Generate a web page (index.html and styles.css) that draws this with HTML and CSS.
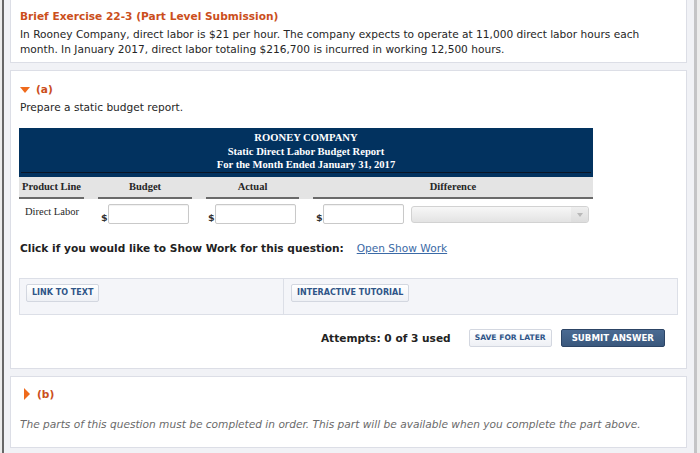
FILE: index.html
```html
<!DOCTYPE html>
<html>
<head>
<meta charset="utf-8">
<link rel="stylesheet" href="styles.css">
</head>
<body>
<div class="frame">
  <section class="card intro">
    <h1 class="title">Brief Exercise 22-3 (Part Level Submission)</h1>
    <p class="para">In Rooney Company, direct labor is $21 per hour. The company expects to operate at 11,000 direct labor hours each<br>month. In January 2017, direct labor totaling $216,700 is incurred in working 12,500 hours.</p>
  </section>

  <section class="card part-a">
    <div class="part-head"><span class="tri-down"></span><span class="part-label">(a)</span></div>
    <p class="prompt">Prepare a static budget report.</p>

    <div class="report">
      <div class="report-head">
        <div class="report-title">ROONEY COMPANY<br>Static Direct Labor Budget Report<br>For the Month Ended January 31, 2017</div>
      </div>
      <div class="grid cols">
        <div class="colh left">Product Line</div>
        <div class="colh">Budget</div>
        <div class="colh">Actual</div>
        <div class="colh">Difference</div>
      </div>
      <div class="grid row">
        <div class="cell label">Direct Labor</div>
        <div class="cell amt b"><span class="cur">$</span><span class="input"></span></div>
        <div class="cell amt a"><span class="cur">$</span><span class="input"></span></div>
        <div class="cell amt d"><span class="cur">$</span><span class="input"></span><span class="select"><span class="arrow"></span></span></div>
      </div>
    </div>

    <p class="showwork"><span class="sw-q">Click if you would like to Show Work for this question:</span><a class="sw-link">Open Show Work</a></p>

    <div class="toolbar">
      <div class="tool-cell"><span class="btn">LINK TO TEXT</span></div>
      <div class="tool-cell divider"><span class="btn">INTERACTIVE TUTORIAL</span></div>
    </div>

    <div class="actions">
      <span class="attempts">Attempts: 0 of 3 used</span>
      <span class="btn save">SAVE FOR LATER</span>
      <span class="btn submit">SUBMIT ANSWER</span>
    </div>
  </section>

  <section class="card part-b">
    <div class="part-head"><span class="tri-right"></span><span class="part-label">(b)</span></div>
    <p class="notice">The parts of this question must be completed in order. This part will be available when you complete the part above.</p>
  </section>
</div>
</body>
</html>
```

FILE: styles.css
```css
html, body {
  margin: 0;
  padding: 0;
  background: #ececec;
}
body {
  font-family: "DejaVu Sans", Verdana, sans-serif;
  font-size: 10.6px;
  color: #262626;
}
.frame {
  margin: 0 3px 0 2px;
  border-left: 2px solid #676767;
  border-right: 3px solid #c4c4c6;
  padding: 0 7px 4px 6px;
  background: #f1f2f6;
  min-height: 449px;
}
.card {
  background: #fff;
  border: 1px solid #dcdee6;
  padding: 0 8px 0 9px;
}
.intro {
  border-top: none;
  padding-top: 9px;
  padding-bottom: 6px;
}
.title {
  margin: 0;
  font-size: 10.6px;
  line-height: 15px;
  font-weight: bold;
  color: #cb4f1c;
}
.para {
  margin: 3px 0 0;
  line-height: 14.5px;
  white-space: nowrap;
}
.part-a {
  margin-top: 7px;
  padding-top: 11px;
  padding-bottom: 21px;
}
.part-head {
  display: flex;
  align-items: center;
  height: 15px;
}
.part-label {
  font-weight: bold;
  color: #cb4f1c;
  line-height: 15px;
}
.tri-down {
  width: 0;
  height: 0;
  border-left: 5.5px solid transparent;
  border-right: 5.5px solid transparent;
  border-top: 6px solid #ef6a1c;
  margin: 0 6px 0 0;
}
.tri-right {
  width: 0;
  height: 0;
  border-top: 6.5px solid transparent;
  border-bottom: 6.5px solid transparent;
  border-left: 6px solid #ef6a1c;
  margin: 0 7px 0 4px;
}
.prompt {
  margin: 3px 0 0;
  line-height: 15px;
}
.report {
  margin: 13px 0 0 -1px;
  width: 574px;
  font-family: "Liberation Serif", "Times New Roman", serif;
}
.report-head {
  background: #02325f;
  padding: 3px 2px 4px;
}
.report-title {
  color: #fff;
  font-weight: bold;
  font-size: 10.6px;
  line-height: 13.5px;
  text-align: center;
  border-bottom: 1px solid #0b1526;
}
.grid {
  display: grid;
  grid-template-columns: 65px 94px 93px 1fr;
  column-gap: 14px;
}
.cols {
  background: #e4e4e4;
}
.colh {
  height: 20px;
  line-height: 19px;
  font-weight: bold;
  font-size: 10.5px;
  text-align: center;
  border-bottom: 2px solid #6a6a6a;
}
.colh.left {
  text-align: left;
  padding-left: 3px;
}
.row {
  height: 29px;
}
.cell.label {
  padding: 6px 0 0 6px;
  font-size: 10.5px;
  line-height: 14px;
}
.amt {
  display: flex;
  align-items: flex-end;
  height: 25px;
}
.amt.b { padding-left: 3px; }
.amt.a { padding-left: 2px; }
.amt.d { padding-left: 3px; }
.cur {
  font-family: "DejaVu Sans", Verdana, sans-serif;
  font-size: 9.5px;
  font-weight: bold;
  color: #333;
  width: 7px;
  line-height: 11px;
  margin-bottom: 1px;
}
.input {
  display: block;
  width: 79px;
  height: 18px;
  border: 1px solid #c9c9c9;
  border-radius: 2px;
  background: #fff;
  box-shadow: inset 0 1px 1px rgba(0,0,0,0.06);
}
.select {
  position: relative;
  display: block;
  width: 176px;
  height: 15px;
  margin: 0 0 1px 7px;
  border: 1px solid #d2d2d2;
  border-radius: 3px;
  background: linear-gradient(#f7f7f7, #e3e3e3);
}
.arrow {
  position: absolute;
  right: 0;
  top: 0;
  width: 17px;
  height: 15px;
  background: linear-gradient(#eeeeee, #dddddd);
  border-radius: 0 3px 3px 0;
}
.arrow::after {
  content: "";
  position: absolute;
  left: 6px;
  top: 6px;
  border-left: 3.5px solid transparent;
  border-right: 3.5px solid transparent;
  border-top: 4px solid #b9b9b9;
}
.showwork {
  margin: 13px 0 0;
  line-height: 14px;
  display: flex;
}
.sw-q {
  font-weight: bold;
  color: #222;
}
.sw-link {
  margin-left: 13px;
  color: #3b6aa6;
  text-decoration: underline;
}
.toolbar {
  margin: 23px 0 0 -1px;
  display: grid;
  grid-template-columns: 263px 1fr;
  border: 1px solid #dcdfe7;
  background: #f4f5f9;
  height: 35px;
}
.tool-cell {
  padding: 5px 0 0 6px;
}
.tool-cell.divider {
  border-left: 1px solid #dcdfe7;
  padding-left: 7px;
}
.btn {
  display: inline-block;
  height: 16px;
  line-height: 16px;
  padding: 0 5px;
  font-size: 8px;
  font-weight: bold;
  color: #2f5588;
  background: linear-gradient(#ffffff, #eef0f5);
  border: 1px solid #d3d7e0;
  border-radius: 2px;
}
.actions {
  margin-top: 14px;
  display: flex;
  justify-content: flex-end;
  align-items: center;
  padding-right: 13px;
  height: 18px;
}
.attempts {
  font-weight: bold;
  font-size: 10.6px;
  color: #222;
  margin-right: 18px;
}
.btn.save {
  padding: 0 5px;
  font-size: 7.6px;
}
.btn.submit {
  margin-left: 9px;
  padding: 0 10px;
  font-size: 8.6px;
  color: #fff;
  background: linear-gradient(#4a6a92, #3a587d);
  border-color: #2c4465;
}
.part-b {
  margin-top: 7px;
  padding-top: 10px;
  padding-bottom: 15px;
}
.notice {
  margin: 15px 0 0;
  line-height: 15px;
  font-style: italic;
  color: #6a6a6a;
}
```
